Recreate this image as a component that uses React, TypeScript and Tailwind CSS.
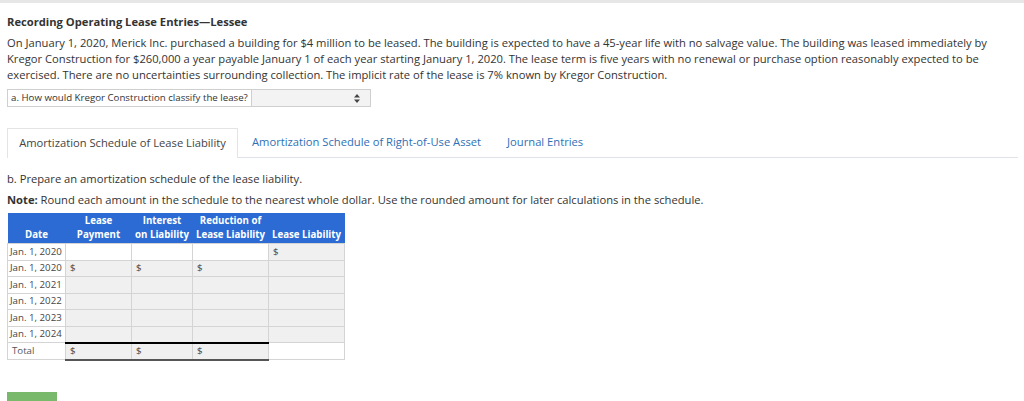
import React from "react"

const rows = ["Jan. 1, 2021", "Jan. 1, 2022", "Jan. 1, 2023", "Jan. 1, 2024"]

export default function App() {
  return (
    <div className="w-[1024px] h-[401px] overflow-hidden bg-white text-[#333] font-['Open_Sans',sans-serif]">
      <div className="h-[3px] bg-[#e6e6e6]" />
      <div className="px-[7px]">
        <h1 className="mt-[11px] text-[11.2px] font-bold leading-[16px] text-[#333]">Recording Operating Lease Entries—Lessee</h1>
        <p className="mt-[5px] text-[11.2px] leading-[16px] pr-[20px]">
          On January 1, 2020, Merick Inc. purchased a building for $4 million to be leased. The building is expected to have a 45-year life with no salvage value. The building was leased immediately by Kregor Construction for $260,000 a year payable January 1 of each year starting January 1, 2020. The lease term is five years with no renewal or purchase option reasonably expected to be exercised. There are no uncertainties surrounding collection. The implicit rate of the lease is 7% known by Kregor Construction.
        </p>

        <div className="mt-[6px] flex w-[364px] h-[18px] border border-[#cfcfcf] text-[9.7px]">
          <div className="w-[244px] shrink-0 flex items-center px-[3px] border-r border-[#cfcfcf] bg-white whitespace-nowrap overflow-hidden">a. How would Kregor Construction classify the lease?</div>
          <div className="flex-1 flex items-center justify-end pr-[10px] bg-[#f3f3f3]">
            <svg width="6" height="9" viewBox="0 0 6 9">
              <path d="M3 0 L6 3.5 L0 3.5 Z M3 9 L6 5.5 L0 5.5 Z" fill="#444" />
            </svg>
          </div>
        </div>

        <div className="mt-[20px] flex items-end border-b border-[#dfe3e8] w-[1011px] text-[11.2px]">
          <div className="h-[30px] w-[231px] flex items-center justify-center border border-b-0 border-[#e4e4e4] bg-white mb-[-1px] text-[#444]">
            Amortization Schedule of Lease Liability
          </div>
          <div className="h-[30px] flex items-center ml-[14px] text-[#2f6fb6]">Amortization Schedule of Right-of-Use Asset</div>
          <div className="h-[30px] flex items-center ml-[26px] text-[#2f6fb6]">Journal Entries</div>
        </div>

        <p className="mt-[13px] text-[11.2px] leading-[16px]">b. Prepare an amortization schedule of the lease liability.</p>
        <p className="mt-[5px] text-[11.2px] leading-[16px]"><span className="font-bold">Note:</span> Round each amount in the schedule to the nearest whole dollar. Use the rounded amount for later calculations in the schedule.</p>

        <table className="mt-[5px] border-collapse text-[9.7px] leading-[12px]">
          <thead>
            <tr className="bg-[#2c6bd3] text-white font-bold leading-[14px]">
              <th className="w-[58px] h-[30px] align-bottom pb-[1px] font-bold">Date</th>
              <th className="w-[66px] align-bottom pb-[1px] font-bold">Lease<br />Payment</th>
              <th className="w-[61px] align-bottom pb-[1px] font-bold">Interest<br />on Liability</th>
              <th className="w-[76px] align-bottom pb-[1px] font-bold">Reduction of<br />Lease Liability</th>
              <th className="w-[76px] align-bottom pb-[1px] font-bold">Lease Liability</th>
            </tr>
          </thead>
          <tbody className="text-[#444]">
            <tr className="h-[17px]">
              <td className="border border-[#d4d4d4] bg-white px-[2px]">Jan. 1, 2020</td>
              <td className="border border-[#d4d4d4] bg-white" />
              <td className="border border-[#d4d4d4] bg-white" />
              <td className="border border-[#d4d4d4] bg-white" />
              <td className="border border-[#d4d4d4] bg-[#f0f0f0] px-[4px]">$</td>
            </tr>
            <tr className="h-[16.5px]">
              <td className="border border-[#d4d4d4] bg-white px-[2px]">Jan. 1, 2020</td>
              <td className="border border-[#d4d4d4] bg-[#f0f0f0] px-[4px]">$</td>
              <td className="border border-[#d4d4d4] bg-[#f0f0f0] px-[4px]">$</td>
              <td className="border border-[#d4d4d4] bg-[#f0f0f0] px-[4px]">$</td>
              <td className="border border-[#d4d4d4] bg-[#f0f0f0]" />
            </tr>
            {rows.map((r) => (
              <tr key={r} className="h-[16.5px]">
                <td className="border border-[#d4d4d4] bg-white px-[2px]">{r}</td>
                <td className="border border-[#d4d4d4] bg-[#f0f0f0]" />
                <td className="border border-[#d4d4d4] bg-[#f0f0f0]" />
                <td className="border border-[#d4d4d4] bg-[#f0f0f0]" />
                <td className="border border-[#d4d4d4] bg-[#f0f0f0]" />
              </tr>
            ))}
            <tr className="h-[17px]">
              <td className="border border-[#d4d4d4] bg-white px-[4px] text-[#555]">Total</td>
              <td className="border border-[#d4d4d4] border-t-[2px] border-t-black border-b-[2px] border-b-[#555] bg-[#f0f0f0] px-[4px]">$</td>
              <td className="border border-[#d4d4d4] border-t-[2px] border-t-black border-b-[2px] border-b-[#555] bg-[#f0f0f0] px-[4px]">$</td>
              <td className="border border-[#d4d4d4] border-t-[2px] border-t-black border-b-[2px] border-b-[#555] bg-[#f0f0f0] px-[4px]">$</td>
              <td className="border border-[#d4d4d4] bg-white" />
            </tr>
          </tbody>
        </table>

        <div className="mt-[31px] w-[50px] h-[12px] bg-[#78b96b]" />
      </div>
    </div>
  )
}
